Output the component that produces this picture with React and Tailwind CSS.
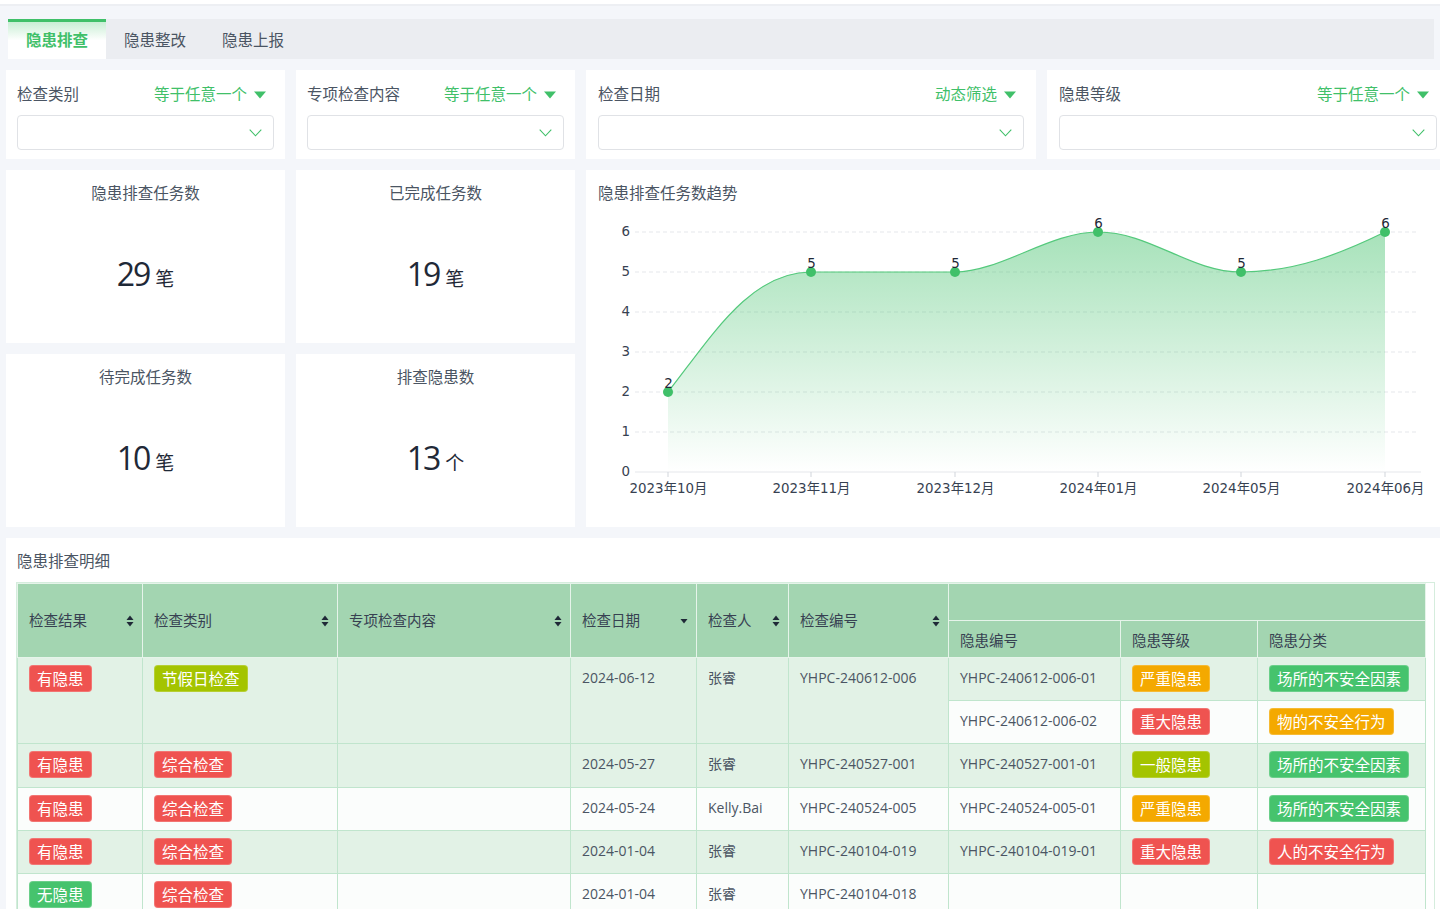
import React from 'react'

const filters = [
  { label: '检查类别', mode: '等于任意一个', width: 'w-[279px] px-[11px]' },
  { label: '专项检查内容', mode: '等于任意一个', width: 'w-[279px] px-[11px]' },
  { label: '检查日期', mode: '动态筛选', width: 'w-[450px] px-3' },
  { label: '隐患等级', mode: '等于任意一个', width: 'w-[402px] shrink-0 px-3' },
]

const stats = [
  { title: '隐患排查任务数', value: '29', unit: '笔' },
  { title: '已完成任务数', value: '19', unit: '笔' },
  { title: '待完成任务数', value: '10', unit: '笔' },
  { title: '排查隐患数', value: '13', unit: '个' },
]

const tagColors = {
  red: 'bg-[#ef5350]',
  orange: 'bg-[#f4a900]',
  lime: 'bg-[#a4c400]',
  green: 'bg-[#46c36d]',
}

const rows = [
  { result: ['有隐患', 'red'], type: ['节假日检查', 'lime'], date: '2024-06-12', person: '张睿', no: 'YHPC-240612-006',
    items: [
      { no: 'YHPC-240612-006-01', level: ['严重隐患', 'orange'], cat: ['场所的不安全因素', 'green'] },
      { no: 'YHPC-240612-006-02', level: ['重大隐患', 'red'], cat: ['物的不安全行为', 'orange'] },
    ] },
  { result: ['有隐患', 'red'], type: ['综合检查', 'red'], date: '2024-05-27', person: '张睿', no: 'YHPC-240527-001',
    items: [{ no: 'YHPC-240527-001-01', level: ['一般隐患', 'lime'], cat: ['场所的不安全因素', 'green'] }] },
  { result: ['有隐患', 'red'], type: ['综合检查', 'red'], date: '2024-05-24', person: 'Kelly.Bai', no: 'YHPC-240524-005',
    items: [{ no: 'YHPC-240524-005-01', level: ['严重隐患', 'orange'], cat: ['场所的不安全因素', 'green'] }] },
  { result: ['有隐患', 'red'], type: ['综合检查', 'red'], date: '2024-01-04', person: '张睿', no: 'YHPC-240104-019',
    items: [{ no: 'YHPC-240104-019-01', level: ['重大隐患', 'red'], cat: ['人的不安全行为', 'red'] }] },
  { result: ['无隐患', 'green'], type: ['综合检查', 'red'], date: '2024-01-04', person: '张睿', no: 'YHPC-240104-018',
    items: [{ no: '', level: null, cat: null }] },
]

const points = [
  { x: 668, y: 392, v: 2, m: '2023年10月' },
  { x: 811, y: 272, v: 5, m: '2023年11月' },
  { x: 955, y: 272, v: 5, m: '2023年12月' },
  { x: 1098, y: 232, v: 6, m: '2024年01月' },
  { x: 1241, y: 272, v: 5, m: '2024年05月' },
  { x: 1385, y: 232, v: 6, m: '2024年06月' },
]

const curve = 'M668 392 C712 336 750 272 811 272 L955 272 C1000 272 1050 232 1098 232 C1150 232 1190 272 1241 272 C1295 272 1340 254 1385 232'

function Tag({ tag }) {
  if (!tag) return null
  return (
    <span className={`inline-block h-[27px] rounded-[4px] border border-white/20 px-[7px] text-[15.5px] leading-[26px] text-white ${tagColors[tag[1]]}`}>
      {tag[0]}
    </span>
  )
}

function SortIcon({ down }) {
  return (
    <svg width="8" height="12" viewBox="0 0 8 12" className="shrink-0">
      {!down && <path d="M4 0.5 L7.5 5 L0.5 5 Z" fill="#1f2937" />}
      <path d={down ? 'M0.5 4 L7.5 4 L4 8.5 Z' : 'M0.5 7 L7.5 7 L4 11.5 Z'} fill="#1f2937" />
    </svg>
  )
}

function Th({ children, down }) {
  return (
    <th rowSpan={2} className="border border-[#e6f4ea] bg-[#a3d5b1] pl-[11px] pr-[8px] pt-[1px] text-left font-normal text-[#374151]">
      <div className="flex items-center justify-between text-[14.5px]">
        <span>{children}</span>
        <SortIcon down={down} />
      </div>
    </th>
  )
}

function Td({ children, rowSpan }) {
  return (
    <td rowSpan={rowSpan} className="border border-[#c0e5cd] px-[11px] pt-[7px] align-top text-[14px] leading-[25px] text-[#4b5563]">
      {children}
    </td>
  )
}

function Chart() {
  return (
    <svg width="854" height="340" viewBox="586 170 854 340" className="absolute left-0 top-0" fontFamily="'DejaVu Sans', 'Noto Sans CJK SC', sans-serif">
      <defs>
        <linearGradient id="area" x1="0" y1="0" x2="0" y2="1">
          <stop offset="0" stopColor="#40c069" stopOpacity="0.46" />
          <stop offset="1" stopColor="#40c069" stopOpacity="0" />
        </linearGradient>
      </defs>
      {[232, 272, 312, 352, 392, 432].map(y => (
        <line key={y} x1="635" x2="1416" y1={y} y2={y} stroke="#e5e7eb" strokeDasharray="4 3" />
      ))}
      {[6, 5, 4, 3, 2, 1, 0].map((v, i) => (
        <text key={v} x="630" y={236 + i * 40} textAnchor="end" fontSize="13.4" fill="#374151">{v}</text>
      ))}
      <path d={curve + ' L1385 472 L668 472 Z'} fill="url(#area)" />
      <path d={curve} fill="none" stroke="#54c97c" strokeWidth="1.2" />
      <line x1="635" x2="1421" y1="472" y2="472" stroke="#e5e7eb" strokeWidth="1.2" />
      {points.map(p => (
        <g key={p.m}>
          <line x1={p.x} x2={p.x} y1="472" y2="477" stroke="#d1d5db" />
          <circle cx={p.x} cy={p.y} r="5" fill="#40c069" />
          <text x={p.x + 0.5} y={p.y - 4} textAnchor="middle" fontSize="13.4" fill="#1f2937">{p.v}</text>
          <text x={p.x + 0.5} y="493" textAnchor="middle" fontSize="13.4" fill="#374151">{p.m}</text>
        </g>
      ))}
    </svg>
  )
}

export default function App() {
  return (
    <div className="h-[909px] w-[1440px] overflow-hidden bg-[#f4f6fa] font-['Open_Sans','Noto_Sans_CJK_SC',sans-serif]">
      <div className="h-[6px] border-b-2 border-[#edeff3] bg-white" />

      <div className="ml-2 mr-[6px] mt-[13px] flex h-10 bg-[#ebedf1] text-[15.5px] text-[#4b5563]">
        <div className="flex w-[98px] items-center justify-center border-t-[3px] border-[#40c069] bg-gradient-to-b from-[#c9eed5] to-white to-50% font-bold text-[#40c069]">隐患排查</div>
        <div className="flex w-[98px] items-center justify-center pt-[3px]">隐患整改</div>
        <div className="flex w-[98px] items-center justify-center pt-[3px]">隐患上报</div>
      </div>

      <div className="ml-[6px] mt-[11px] flex w-[1443px] gap-[11px]">
        {filters.map(f => (
          <div key={f.label} className={`h-[89px] bg-white pt-[12px] ${f.width}`}>
            <div className="flex h-[26px] items-center justify-between pr-2 text-[15.5px]">
              <span className="text-[#4b5563]">{f.label}</span>
              <span className="flex items-center gap-[7px] text-[#40c069]">
                {f.mode}
                <svg width="12" height="8" viewBox="0 0 12 8"><path d="M0 0.5 H12 L6 7.5 Z" fill="#40c069" /></svg>
              </span>
            </div>
            <div className="mt-[7px] flex h-[35px] items-center justify-end rounded-[4px] border border-[#e0e2e6] pr-[11px]">
              <svg width="13" height="8" viewBox="0 0 13 8" fill="none"><path d="M0.7 0.7 L6.5 6.8 L12.3 0.7" stroke="#40c069" strokeWidth="1.1" /></svg>
            </div>
          </div>
        ))}
      </div>

      <div className="ml-[6px] mt-[11px] flex h-[357px] w-[1443px] gap-[11px]">
        <div className="grid w-[569px] shrink-0 grid-cols-2 grid-rows-2 gap-[11px]">
          {stats.map(s => (
            <div key={s.title} className="flex flex-col items-center bg-white pt-[10px]">
              <div className="text-[15.5px] leading-[26px] text-[#4b5563]">{s.title}</div>
              <div className="mt-[45px] flex items-baseline gap-[6px] text-[#1f2937]">
                <span className="text-[32px] font-normal leading-[46px] tracking-[-2px]">{s.value}</span>
                <span className="text-[19px]">{s.unit}</span>
              </div>
            </div>
          ))}
        </div>
        <div className="relative flex-1 bg-white">
          <div className="relative z-10 pl-3 pt-[10px] text-[15.5px] leading-[26px] text-[#4b5563]">隐患排查任务数趋势</div>
          <Chart />
        </div>
      </div>

      <div className="ml-[6px] mt-[11px] h-[400px] w-[1443px] bg-white pl-[10px] pt-[11px]">
        <div className="ml-px text-[15.5px] leading-[24px] text-[#4b5563]">隐患排查明细</div>
        <div className="mt-[9px] w-[1419px] border border-[#d5eddd] pr-[9px]">
          <table className="w-[1408px] table-fixed border-collapse">
            <colgroup>
              <col className="w-[125px]" />
              <col className="w-[195px]" />
              <col className="w-[233px]" />
              <col className="w-[126px]" />
              <col className="w-[92px]" />
              <col className="w-[160px]" />
              <col className="w-[172px]" />
              <col className="w-[137px]" />
              <col className="w-[168px]" />
            </colgroup>
            <thead>
              <tr className="h-[37px]">
                <Th>检查结果</Th>
                <Th>检查类别</Th>
                <Th>专项检查内容</Th>
                <Th down>检查日期</Th>
                <Th>检查人</Th>
                <Th>检查编号</Th>
                <th colSpan={3} className="border border-[#e6f4ea] bg-[#a3d5b1]" />
              </tr>
              <tr className="h-[37px]">
                {['隐患编号', '隐患等级', '隐患分类'].map(h => (
                  <th key={h} className="border border-[#e6f4ea] bg-[#a3d5b1] px-[11px] pt-[3px] text-left text-[14.5px] font-normal text-[#374151]">{h}</th>
                ))}
              </tr>
            </thead>
            <tbody>
              {rows.map((r, i) => r.items.map((it, j) => {
                const span = r.items.length
                const even = i === 0 || i === 1 || i === 3
                const rowBg = even ? 'bg-[#e2f2e6]' : 'bg-[#fbfdfc]'
                const itemBg = j === 1 ? 'bg-[#fbfdfc]' : ''
                return (
                  <tr key={r.no + j} className={`h-[43.2px] ${rowBg}`}>
                    {j === 0 && (
                      <>
                        <Td rowSpan={span}><Tag tag={r.result} /></Td>
                        <Td rowSpan={span}><Tag tag={r.type} /></Td>
                        <Td rowSpan={span} />
                        <Td rowSpan={span}>{r.date}</Td>
                        <Td rowSpan={span}>{r.person}</Td>
                        <Td rowSpan={span}>{r.no}</Td>
                      </>
                    )}
                    <td className={`border border-[#c0e5cd] px-[11px] pt-[7px] align-top text-[14px] leading-[25px] text-[#4b5563] ${itemBg}`}>{it.no}</td>
                    <td className={`border border-[#c0e5cd] px-[11px] pt-[7px] align-top ${itemBg}`}><Tag tag={it.level} /></td>
                    <td className={`border border-[#c0e5cd] px-[11px] pt-[7px] align-top ${itemBg}`}><Tag tag={it.cat} /></td>
                  </tr>
                )
              }))}
            </tbody>
          </table>
        </div>
      </div>
    </div>
  )
}
